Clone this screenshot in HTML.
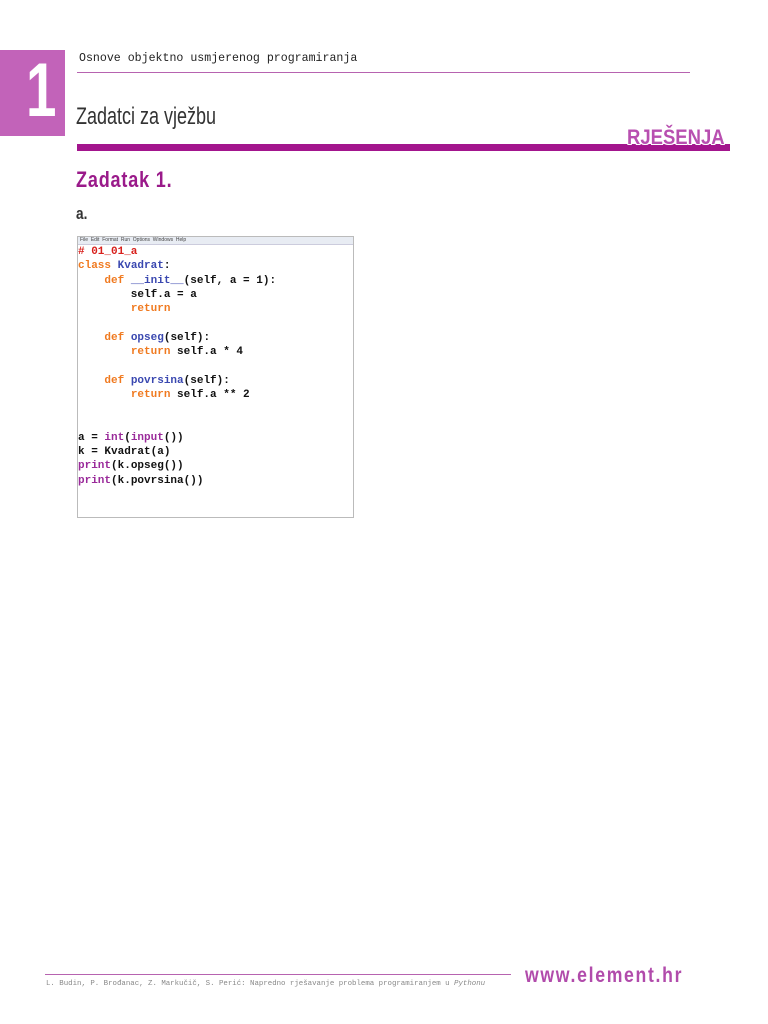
<!DOCTYPE html>
<html><head><meta charset="utf-8"><style>
body{margin:0;width:768px;height:1024px;background:#fff;position:relative;overflow:hidden;font-family:"Liberation Sans",sans-serif}
.a{position:absolute}
.code{font-family:"Liberation Mono",monospace;font-weight:bold;font-size:11px;line-height:14.3px;white-space:pre;color:#111}
.o{color:#f07a20}.b{color:#3a48b0}.p{color:#9a2a9a}.r{color:#d8201c}
</style></head><body>
<div class="a" style="left:0;top:50px;width:65px;height:86px;background:#c263b9"></div>
<div class="a" style="left:26px;top:48px;color:#fff;font:bold 76px/86px 'Liberation Sans',sans-serif;transform:scaleX(0.72);transform-origin:left">1</div>
<div class="a" style="left:79px;top:52px;font:11.6px 'Liberation Mono',monospace;color:#222">Osnove objektno usmjerenog programiranja</div>
<div class="a" style="left:77px;top:72px;width:613px;height:1px;background:#b763b0"></div>
<div class="a" style="left:76px;top:103px;font:24px 'Liberation Sans',sans-serif;color:#333;transform:scaleX(0.75);transform-origin:left;white-space:nowrap">Zadatci za vježbu</div>
<div class="a" style="left:77px;top:144px;width:653px;height:7px;background:#a3158d"></div>
<div class="a" style="left:627px;top:126px;font:bold 21px/24px 'Liberation Sans',sans-serif;color:#b84fb0;transform:scaleX(0.88);transform-origin:left;white-space:nowrap;text-shadow:-1px -1px 0 #fff,1px 1px 0 #fff,1px -1px 0 #fff,-1px 1px 0 #fff">RJEŠENJA</div>
<div class="a" style="left:76px;top:167px;font:bold 22px 'Liberation Sans',sans-serif;color:#9a1a8a;letter-spacing:1px;transform:scaleX(0.82);transform-origin:left;white-space:nowrap">Zadatak 1.</div>
<div class="a" style="left:76px;top:204px;font:bold 17px 'Liberation Sans',sans-serif;color:#333;transform:scaleX(0.8);transform-origin:left">a.</div>
<div class="a" style="left:77px;top:236px;width:275px;height:280px;border:1px solid #bbb;background:#fff"></div>
<div class="a" style="left:78px;top:237px;width:273px;height:7px;background:#e8ecf3;border-bottom:1px solid #ccd;font:5px/7px 'Liberation Sans',sans-serif;color:#444;padding-left:2px">File&nbsp; Edit&nbsp; Format&nbsp; Run&nbsp; Options&nbsp; Windows&nbsp; Help</div>
<div class="a code" style="left:78px;top:245px"><span class="r"># 01_01_a</span>
<span class="o">class</span> <span class="b">Kvadrat</span>:
    <span class="o">def</span> <span class="b">__init__</span>(self, a = 1):
        self.a = a
        <span class="o">return</span>

    <span class="o">def</span> <span class="b">opseg</span>(self):
        <span class="o">return</span> self.a * 4

    <span class="o">def</span> <span class="b">povrsina</span>(self):
        <span class="o">return</span> self.a ** 2


a = <span class="p">int</span>(<span class="p">input</span>())
k = Kvadrat(a)
<span class="p">print</span>(k.opseg())
<span class="p">print</span>(k.povrsina())</div>
<div class="a" style="left:45px;top:974px;width:466px;height:1px;background:#b763b0"></div>
<div class="a" style="left:46px;top:980px;font:7.4px 'Liberation Mono',monospace;color:#888;white-space:nowrap">L. Budin, P. Brođanac, Z. Markučič, S. Perić: Napredno rješavanje problema programiranjem u <i>Pythonu</i></div>
<div class="a" style="left:525px;top:964px;font:bold 21px 'Liberation Sans',sans-serif;color:#b14bab;letter-spacing:2px;transform:scaleX(0.84);transform-origin:left;white-space:nowrap">www.element.hr</div>
</body></html>
